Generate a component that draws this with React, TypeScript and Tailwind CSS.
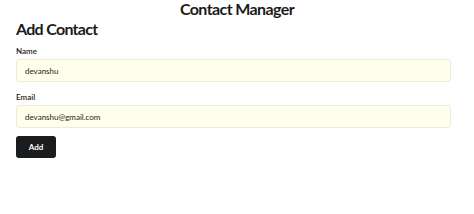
export default function App() {
  return (
    <div className="min-h-screen bg-white font-['Lato','Liberation_Sans',sans-serif] text-[#1b1b1b]">
      <h1 className="text-center text-[16px] font-bold leading-[17px] tracking-[-0.6px]">Contact Manager</h1>
      <div className="pl-4 pr-[23px]">
        <h2 className="mt-[2px] text-[16px] font-bold leading-[20px] tracking-[-0.7px]">Add Contact</h2>
        <form className="mt-[6px]">
          <label className="block text-[8px] font-semibold leading-[12px]">Name</label>
          <input
            className="mt-[2px] block h-[23px] w-full rounded-[3px] border border-[#ecebd3] bg-[#fefeea] px-[8px] text-[8px] text-[#222] outline-none"
            defaultValue="devanshu"
          />
          <label className="mt-[9px] block text-[8px] font-semibold leading-[12px]">Email</label>
          <input
            className="mt-[2px] block h-[23px] w-full rounded-[3px] border border-[#ecebd3] bg-[#fefeea] px-[8px] text-[8px] text-[#222] outline-none"
            defaultValue="devanshu@gmail.com"
          />
          <button
            type="button"
            className="mt-[8px] block h-[22px] w-[40px] rounded-[3px] bg-[#1b1c1d] text-[8px] font-bold text-white"
          >
            Add
          </button>
        </form>
      </div>
    </div>
  );
}
